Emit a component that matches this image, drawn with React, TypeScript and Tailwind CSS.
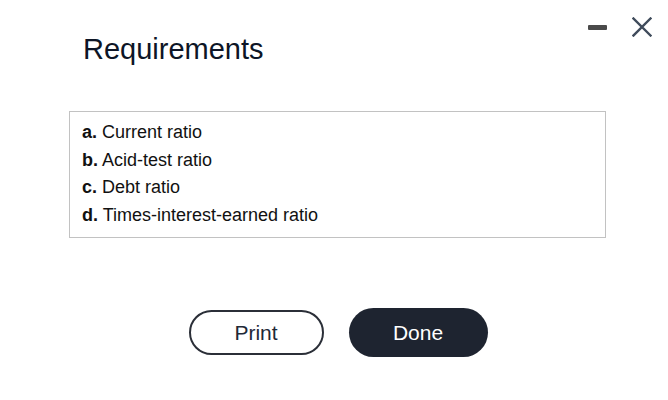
import React from 'react';

const items = [
  { key: 'a.', label: 'Current ratio' },
  { key: 'b.', label: 'Acid-test ratio' },
  { key: 'c.', label: 'Debt ratio' },
  { key: 'd.', label: 'Times-interest-earned ratio' },
];

const App: React.FC = () => {
  return (
    <div
      className="relative w-[668px] h-[400px] bg-white text-[#111827]"
      style={{ fontFamily: '"Liberation Sans", Arial, sans-serif' }}
    >
      {/* window controls */}
      <div className="absolute top-[17px] right-[16px] flex items-center gap-[25px]">
        <div className="w-[19px] h-[5px] bg-[#4a4a4a] rounded-[1px]" />
        <svg width="20" height="20" viewBox="0 0 20 20" className="text-[#3f4b5b]">
          <path d="M1.5 1.5 L18.5 18.5 M18.5 1.5 L1.5 18.5" stroke="currentColor" strokeWidth="2.4" strokeLinecap="square" />
        </svg>
      </div>

      <div className="flex flex-col pt-[31px]">
        <h1 className="pl-[83px] text-[29px] leading-[36px] text-[#0d1526]">Requirements</h1>

        <div className="mt-[44px] ml-[69px] w-[537px] border border-[#c2c2c2] pl-[12px] pt-[7px] pb-[8px]">
          {items.map(it => (
            <div key={it.key} className="text-[18px] leading-[27.5px] text-[#111]">
              <span className="font-bold">{it.key}</span> {it.label}
            </div>
          ))}
        </div>

        <div className="mt-[70px] flex justify-center items-center gap-[25px] pl-[8px]">
          <button className="w-[135px] h-[45px] rounded-full border-[2.5px] border-[#2b2f38] bg-white text-[21px] text-[#1f2937]">
            Print
          </button>
          <button className="w-[139px] h-[49px] rounded-full bg-[#1e2430] text-[21px] text-white">
            Done
          </button>
        </div>
      </div>
    </div>
  );
};

export default App;
